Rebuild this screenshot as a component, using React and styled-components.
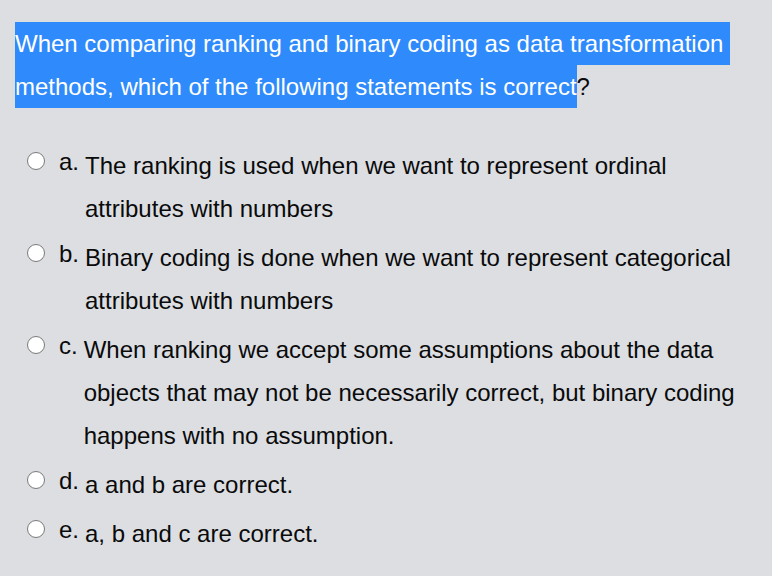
import React from 'react'
import styled, { createGlobalStyle } from 'styled-components'

const GlobalStyle = createGlobalStyle`
  html, body {
    margin: 0;
    padding: 0;
    background: #dcdee2;
  }

  body {
    font-family: "Liberation Sans", Arial, sans-serif;
    color: #0a0a0a;
  }
`

const Page = styled.div`
  width: 772px;
  height: 576px;
  overflow: hidden;
  padding-top: 22px;
  box-sizing: border-box;
`

const Question = styled.div`
  margin-left: 15px;
  font-size: 24px;
  line-height: 43px;
`

const QuestionLine = styled.div`
  display: flex;
`

const Selected = styled.span`
  display: inline-block;
  background: #2f8bfb;
  color: #fff;
  padding-right: ${({ $tail }) => $tail || 0}px;
`

const Options = styled.div`
  margin-top: 36px;
  display: flex;
  flex-direction: column;
  gap: 6px;
`

const Option = styled.label`
  display: flex;
  align-items: flex-start;
  padding-left: 27px;
  font-size: 24px;
  line-height: 43px;
`

const Radio = styled.span`
  flex: none;
  width: 18px;
  height: 18px;
  margin-top: 8px;
  box-sizing: border-box;
  border-radius: 50%;
  border: 1.5px solid #7a7a7a;
  background: #fff;
`

const Letter = styled.span`
  flex: none;
  margin-left: 14px;
  margin-right: 6px;
  margin-top: -4px;
`

const Text = styled.span`
  width: 665px;
`

const options = [
  { letter: 'a.', text: 'The ranking is used when we want to represent ordinal attributes with numbers' },
  { letter: 'b.', text: 'Binary coding is done when we want to represent categorical attributes with numbers' },
  { letter: 'c.', text: 'When ranking we accept some assumptions about the data objects that may not be necessarily correct, but binary coding happens with no assumption.' },
  { letter: 'd.', text: 'a and b are correct.' },
  { letter: 'e.', text: 'a, b and c are correct.' }
]

const App = () => (
  <Page>
    <GlobalStyle />
    <Question>
      <QuestionLine>
        <Selected $tail={7}>When comparing ranking and binary coding as data transformation</Selected>
      </QuestionLine>
      <QuestionLine>
        <Selected>methods, which of the following statements is correct</Selected>?
      </QuestionLine>
    </Question>
    <Options>
      {options.map((item) => (
        <Option key={item.letter}>
          <Radio />
          <Letter>{item.letter}</Letter>
          <Text>{item.text}</Text>
        </Option>
      ))}
    </Options>
  </Page>
)

export default App
